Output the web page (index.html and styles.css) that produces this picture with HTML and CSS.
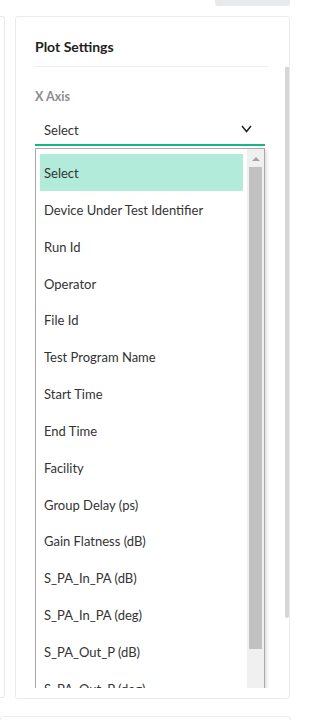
FILE: index.html
```html
<!DOCTYPE html>
<html lang="en">
<head>
    <meta charset="UTF-8">
    <meta name="viewport" content="width=device-width, initial-scale=1.0">
    <title>Plot Settings</title>
    <link rel="stylesheet" href="styles.css">
</head>
<body>
    <div class="topbar">
        <div class="top-button"></div>
    </div>
    <div class="layout">
        <div class="side-panel"></div>
        <div class="card">
            <div class="card-content">
                <div class="card-title">Plot Settings</div>
                <div class="field-label">X Axis</div>
                <div class="select-box">
                    <span class="select-value">Select</span>
                    <svg class="chevron" width="11" height="8" viewBox="0 0 11 8">
                        <polyline points="1,1 5.5,6.5 10,1" fill="none" stroke="#222" stroke-width="1.5"/>
                    </svg>
                </div>
                <div class="option-list">
                    <div class="options">
                        <div class="option selected">Select</div>
                        <div class="option">Device Under Test Identifier</div>
                        <div class="option">Run Id</div>
                        <div class="option">Operator</div>
                        <div class="option">File Id</div>
                        <div class="option">Test Program Name</div>
                        <div class="option">Start Time</div>
                        <div class="option">End Time</div>
                        <div class="option">Facility</div>
                        <div class="option">Group Delay (ps)</div>
                        <div class="option">Gain Flatness (dB)</div>
                        <div class="option">S_PA_In_PA (dB)</div>
                        <div class="option">S_PA_In_PA (deg)</div>
                        <div class="option">S_PA_Out_P (dB)</div>
                        <div class="option">S_PA_Out_P (deg)</div>
                        <div class="option">S_PA_Out_PA (dB)</div>
                    </div>
                    <div class="list-scrollbar">
                        <div class="scroll-arrow"></div>
                        <div class="scroll-thumb"></div>
                    </div>
                </div>
            </div>
            <div class="card-scrollbar"></div>
        </div>
    </div>
    <div class="next-card"></div>
</body>
</html>
```

FILE: styles.css
```css
body {
    font-family: Lato, "Open Sans", sans-serif;
    background-color: #fff;
    color: #333;
    margin: 0;
    width: 323px;
    overflow: hidden;
}

.topbar {
    height: 6px;
    display: flex;
}

.top-button {
    width: 75px;
    height: 6px;
    margin-left: 215px;
    background-color: #e8e9eb;
    border-radius: 0 0 3px 3px;
}

.layout {
    display: flex;
    margin-top: 10px;
    gap: 10px;
}

.side-panel {
    width: 4px;
    height: 680px;
    border: 1px solid #e9e9e9;
    border-left: none;
    border-radius: 0 3px 3px 0;
}

.card {
    width: 273px;
    height: 681px;
    border: 1px solid #ebebeb;
    border-radius: 3px;
    display: flex;
}

.card-content {
    flex: 1;
    min-width: 0;
    padding: 0 17px 0 19px;
    margin-bottom: 10px;
    overflow: hidden;
}

.card-title {
    font-size: 14px;
    font-weight: 700;
    color: #222;
    line-height: 20px;
    padding: 20px 0 9px;
    border-bottom: 1px solid #eeeeee;
}

.field-label {
    margin-top: 21px;
    font-size: 12.5px;
    font-weight: 700;
    color: #8c8c8c;
    line-height: 18px;
}

.select-box {
    width: 230px;
    height: 33px;
    margin-top: 7px;
    border-bottom: 2px solid #12b886;
    display: flex;
    align-items: center;
    justify-content: space-between;
    padding: 2px 13px 0 9px;
    box-sizing: border-box;
    font-size: 13px;
}

.select-value {
    color: #333;
}

.chevron {
    margin-top: -1px;
}

.option-list {
    width: 230px;
    height: 560px;
    margin-top: 2px;
    border: 1px solid #a9a9a9;
    box-sizing: border-box;
    box-shadow: 2px 2px 3px rgba(0, 0, 0, 0.12);
    display: flex;
    background-color: #fff;
}

.options {
    flex: 1;
    padding: 5px 4px 0;
    overflow: hidden;
}

.option {
    height: 36.85px;
    line-height: 38px;
    padding-left: 4px;
    font-size: 13px;
    color: #333;
    white-space: nowrap;
}

.option.selected {
    background-color: #b3ebdb;
}

.list-scrollbar {
    width: 17px;
    background-color: #f0f0f0;
    display: flex;
    flex-direction: column;
    align-items: center;
}

.scroll-arrow {
    width: 0;
    height: 0;
    margin-top: 8px;
    border-left: 4px solid transparent;
    border-right: 4px solid transparent;
    border-bottom: 4px solid #a3a3a3;
}

.scroll-thumb {
    width: 13px;
    height: 482px;
    margin-top: 6px;
    background-color: #c1c1c1;
}

.card-scrollbar {
    width: 4px;
    height: 551px;
    margin-top: 50px;
    background-color: #d6d6d6;
    border-radius: 0 0 2px 2px;
}

.next-card {
    width: 289px;
    height: 20px;
    margin-top: 17px;
    border: 1px solid #ededed;
    border-radius: 3px;
}
```
